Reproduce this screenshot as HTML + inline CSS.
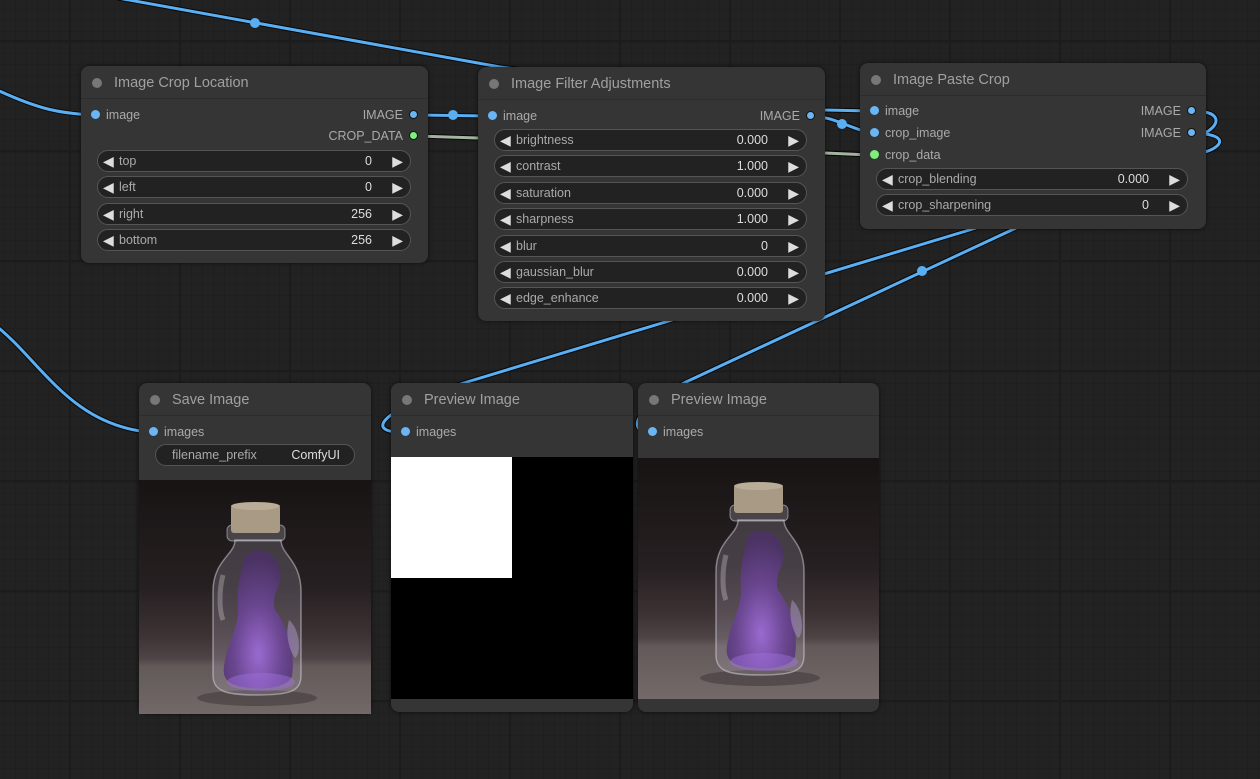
<!DOCTYPE html>
<html><head><meta charset="utf-8">
<style>
*{box-sizing:border-box;margin:0;padding:0}
html,body{width:1260px;height:779px;overflow:hidden}
body{position:relative;font-family:"Liberation Sans",sans-serif;
background-color:#222;
background-image:
linear-gradient(90deg,#1c1c1c 2px,transparent 2px),
linear-gradient(0deg,#1c1c1c 2px,transparent 2px),
linear-gradient(90deg,#1f1f1f 1px,transparent 1px),
linear-gradient(0deg,#1f1f1f 1px,transparent 1px);
background-size:110px 110px,110px 110px,11px 11px,11px 11px;
background-position:69px 0,0 42px,4px 0,0 10px;}
svg.w{position:absolute;left:0;top:0}
.node{position:absolute;background:#353535;border-radius:8px;box-shadow:0 0 4px rgba(0,0,0,.6)}
.title{position:absolute;left:0;top:0;right:0;height:33px;border-bottom:1px solid #2c2c2c;color:#a0a0a0;font-size:14.5px;line-height:35px;padding-left:33px}
.title:before{content:"";position:absolute;left:11px;top:12px;width:10px;height:10px;border-radius:50%;background:#777}
.slot{position:absolute;color:#aaa;font-size:12.5px;line-height:14px;height:14px}
.in{padding-left:21px}
.in:before{content:"";position:absolute;left:6px;top:2px;width:9px;height:9px;border-radius:50%;background:#6ab6f5}
.out{text-align:right;padding-right:21px}
.out:after{content:"";position:absolute;right:6px;top:2px;width:7px;height:7px;border-radius:50%;background:#6ab6f5;border:1px solid #111}
.g:before{background:#7ef07a}.g:after{background:#7ef07a}
.wd{position:absolute;height:22px;background:#222;border:1px solid #555;border-radius:11px;font-size:12.5px;line-height:20px;color:#aaa}
.wd .l{position:absolute;left:5px;top:0;color:#ddd;font-size:14px}
.wd .n{position:absolute;left:21px;top:0}
.wd .v{position:absolute;right:38px;top:0;color:#ddd}
.wd .r{position:absolute;right:7px;top:0;color:#ddd;font-size:14px}
.img{position:absolute;overflow:hidden}
</style></head><body>
<svg class="w" width="1260" height="779">
<g fill="none" stroke-linecap="round">
<g stroke="#000" stroke-width="5" opacity=".8">
<path d="M118,-2 L500,67 L825,110 L870,111"/>
<path d="M-5,89 C40,110 60,113 91,115"/>
<path d="M417,115 L489,116"/>
<path d="M815,116 C835,118 845,126 870,133"/>
<path d="M-5,325 C40,360 70,425 149,432"/>
<path d="M1196,111 C1222,112 1220,125 1205,133"/>
<path d="M1196,133 C1230,135 1222,147 1205,152"/>
<path d="M976,228 L467,382 C380,410 365,432 401,432"/>
<path d="M1016,228 L686,382 C630,410 630,432 648,432"/>
</g>
<path d="M417,136 L478,138 M825,153 L870,155" stroke="#000" stroke-width="5" opacity=".8"/>
<path d="M417,136 L478,138 M825,153 L870,155" stroke="#a4b4a0" stroke-width="3"/>
<g stroke="#5aaef2" stroke-width="3">
<path d="M118,-2 L500,67 L825,110 L870,111"/>
<path d="M-5,89 C40,110 60,113 91,115"/>
<path d="M417,115 L489,116"/>
<path d="M815,116 C835,118 845,126 870,133"/>
<path d="M-5,325 C40,360 70,425 149,432"/>
<path d="M1196,111 C1222,112 1220,125 1205,133"/>
<path d="M1196,133 C1230,135 1222,147 1205,152"/>
<path d="M976,228 L467,382 C380,410 365,432 401,432"/>
<path d="M1016,228 L686,382 C630,410 630,432 648,432"/>
</g>
</g>
<g fill="#5aaef2"><circle cx="255" cy="23" r="5"/><circle cx="453" cy="115" r="5"/><circle cx="842" cy="124" r="5"/><circle cx="922" cy="271" r="5"/></g>
</svg>

<div class="node" style="left:81px;top:66px;width:347px;height:197px">
<div class="title">Image Crop Location</div>
<div class="slot in" style="left:4px;top:42px">image</div>
<div class="slot out" style="right:4px;top:42px">IMAGE</div>
<div class="slot out g" style="right:4px;top:63px">CROP_DATA</div>
<div class="wd" style="left:16px;top:84px;width:314px"><span class="l">◀</span><span class="n">top</span><span class="v">0</span><span class="r">▶</span></div>
<div class="wd" style="left:16px;top:110px;width:314px"><span class="l">◀</span><span class="n">left</span><span class="v">0</span><span class="r">▶</span></div>
<div class="wd" style="left:16px;top:137px;width:314px"><span class="l">◀</span><span class="n">right</span><span class="v">256</span><span class="r">▶</span></div>
<div class="wd" style="left:16px;top:163px;width:314px"><span class="l">◀</span><span class="n">bottom</span><span class="v">256</span><span class="r">▶</span></div>
</div>

<div class="node" style="left:478px;top:67px;width:347px;height:254px">
<div class="title">Image Filter Adjustments</div>
<div class="slot in" style="left:4px;top:42px">image</div>
<div class="slot out" style="right:4px;top:42px">IMAGE</div>
<div class="wd" style="left:16px;top:62px;width:313px"><span class="l">◀</span><span class="n">brightness</span><span class="v">0.000</span><span class="r">▶</span></div>
<div class="wd" style="left:16px;top:88px;width:313px"><span class="l">◀</span><span class="n">contrast</span><span class="v">1.000</span><span class="r">▶</span></div>
<div class="wd" style="left:16px;top:115px;width:313px"><span class="l">◀</span><span class="n">saturation</span><span class="v">0.000</span><span class="r">▶</span></div>
<div class="wd" style="left:16px;top:141px;width:313px"><span class="l">◀</span><span class="n">sharpness</span><span class="v">1.000</span><span class="r">▶</span></div>
<div class="wd" style="left:16px;top:168px;width:313px"><span class="l">◀</span><span class="n">blur</span><span class="v">0</span><span class="r">▶</span></div>
<div class="wd" style="left:16px;top:194px;width:313px"><span class="l">◀</span><span class="n">gaussian_blur</span><span class="v">0.000</span><span class="r">▶</span></div>
<div class="wd" style="left:16px;top:220px;width:313px"><span class="l">◀</span><span class="n">edge_enhance</span><span class="v">0.000</span><span class="r">▶</span></div>
</div>

<div class="node" style="left:860px;top:63px;width:346px;height:166px">
<div class="title">Image Paste Crop</div>
<div class="slot in" style="left:4px;top:41px">image</div>
<div class="slot in" style="left:4px;top:63px">crop_image</div>
<div class="slot in g" style="left:4px;top:85px">crop_data</div>
<div class="slot out" style="right:4px;top:41px">IMAGE</div>
<div class="slot out" style="right:4px;top:63px">IMAGE</div>
<div class="wd" style="left:16px;top:105px;width:312px"><span class="l">◀</span><span class="n">crop_blending</span><span class="v">0.000</span><span class="r">▶</span></div>
<div class="wd" style="left:16px;top:131px;width:312px"><span class="l">◀</span><span class="n">crop_sharpening</span><span class="v">0</span><span class="r">▶</span></div>
</div>

<svg width="0" height="0" style="position:absolute">
<defs>
<linearGradient id="bg" x1="0" y1="0" x2="0" y2="1">
<stop offset="0" stop-color="#161212"/><stop offset=".45" stop-color="#272022"/><stop offset=".62" stop-color="#3c3234"/><stop offset=".71" stop-color="#4e4446"/><stop offset=".74" stop-color="#625959"/><stop offset="1" stop-color="#786f6e"/>
</linearGradient>
<radialGradient id="cr" cx=".5" cy=".75" r=".7"><stop offset="0" stop-color="#9a6ad0"/><stop offset=".5" stop-color="#6a4690"/><stop offset="1" stop-color="#4a3262"/></radialGradient>
<g id="bottle">
<rect x="-10" y="-10" width="265" height="265" fill="url(#bg)"/>
<ellipse cx="118" cy="218" rx="60" ry="8" fill="#3a3234" opacity=".5"/>
<path d="M96,60 C96,75 74,80 74,112 L74,195 C74,211 86,215 118,215 C152,215 162,211 162,195 L162,112 C162,80 142,75 142,60 Z" fill="rgba(200,190,215,0.2)" stroke="rgba(230,230,240,0.45)" stroke-width="1.5"/>
<path d="M106,76 C116,66 134,70 140,86 C146,106 131,112 136,130 C151,150 156,176 153,196 C150,206 130,210 112,208 C90,206 83,200 85,186 C89,160 99,150 99,130 C97,112 101,95 106,76Z" fill="url(#cr)"/>
<ellipse cx="122" cy="202" rx="34" ry="9" fill="#a070e0" opacity=".45"/>
<path d="M150,140 C162,150 162,175 156,178 C150,170 146,155 150,140Z" fill="#b9a0d8" opacity=".45"/>
<path d="M84,95 C80,110 80,130 84,140" stroke="#fff" stroke-width="5" fill="none" opacity=".25"/>
<rect x="88" y="45" width="58" height="16" rx="5" fill="rgba(220,220,230,0.22)" stroke="rgba(240,240,250,0.45)"/>
<rect x="92" y="25" width="49" height="28" rx="3" fill="#a89a84"/>
<ellipse cx="116.5" cy="26" rx="24.5" ry="4" fill="#baad98"/>
</g>
</defs>
</svg>

<div class="node" style="left:139px;top:383px;width:232px;height:331px">
<div class="title">Save Image</div>
<div class="slot in" style="left:4px;top:42px">images</div>
<div class="wd" style="left:16px;top:61px;width:200px"><span class="n" style="left:16px">filename_prefix</span><span class="v" style="right:14px">ComfyUI</span></div>
<svg class="img" style="left:0;top:97px" width="232" height="234"><use href="#bottle"/></svg>
</div>

<div class="node" style="left:391px;top:383px;width:242px;height:329px">
<div class="title">Preview Image</div>
<div class="slot in" style="left:4px;top:42px">images</div>
<div class="img" style="left:0;top:74px;width:242px;height:242px;background:#000"><div style="width:121px;height:121px;background:#fff"></div></div>
</div>

<div class="node" style="left:638px;top:383px;width:241px;height:329px">
<div class="title">Preview Image</div>
<div class="slot in" style="left:4px;top:42px">images</div>
<svg class="img" style="left:0;top:75px" width="241" height="241"><g transform="translate(4,2)"><use href="#bottle"/></g></svg>
</div>
</body></html>
